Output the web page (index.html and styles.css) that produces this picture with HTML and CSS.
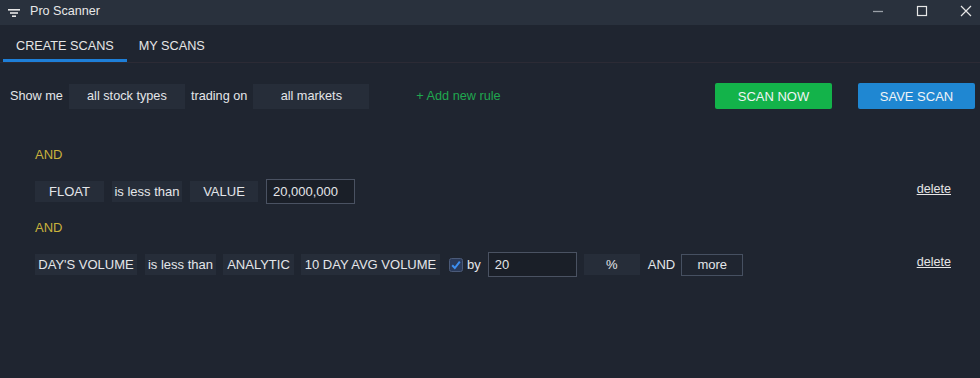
FILE: index.html
```html
<!DOCTYPE html>
<html>
<head>
<meta charset="utf-8">
<link rel="stylesheet" href="styles.css">
</head>
<body>
<div class="titlebar">
  <svg class="appicon" width="12" height="10" viewBox="0 0 12 10"><rect x="0" y="1" width="12" height="1.6" fill="#e6e6e6"/><rect x="2" y="4.2" width="8" height="1.6" fill="#e6e6e6"/><rect x="4" y="7.4" width="4" height="1.6" fill="#e6e6e6"/></svg>
  <span class="title">Pro Scanner</span>
  <div class="winctl">
    <svg width="12" height="12" viewBox="0 0 12 12"><line x1="1" y1="6.5" x2="11" y2="6.5" stroke="#9aa0a8" stroke-width="1.3"/></svg>
    <svg width="12" height="12" viewBox="0 0 12 12"><rect x="1.5" y="1.5" width="9" height="9" fill="none" stroke="#e6e6e6" stroke-width="1.2"/></svg>
    <svg width="12" height="12" viewBox="0 0 12 12"><path d="M1 1L11 11M11 1L1 11" stroke="#e6e6e6" stroke-width="1.2"/></svg>
  </div>
</div>
<div class="tabs">
  <div class="tab active">CREATE SCANS</div>
  <div class="tab">MY SCANS</div>
</div>
<div class="toolbar">
  <span class="lbl">Show me</span>
  <span class="box w116">all stock types</span>
  <span class="lbl">trading on</span>
  <span class="box w116">all markets</span>
  <span class="addrule">+ Add new rule</span>
  <span class="spacer"></span>
  <button class="btn green">SCAN NOW</button>
  <button class="btn blue">SAVE SCAN</button>
</div>
<div class="rules">
  <div class="and">AND</div>
  <div class="rule">
    <span class="box s w69">FLOAT</span>
    <span class="box s w70">is less than</span>
    <span class="box s w68">VALUE</span>
    <span class="input w89">20,000,000</span>
    <span class="spacer"></span>
    <a class="delete">delete</a>
  </div>
  <div class="and">AND</div>
  <div class="rule">
    <span class="box s w102">DAY'S VOLUME</span>
    <span class="box s w71 g7">is less than</span>
    <span class="box s w71 g7">ANALYTIC</span>
    <span class="box s w139">10 DAY AVG VOLUME</span>
    <span class="check"><svg width="14" height="14" viewBox="0 0 14 14"><rect x="0.5" y="0.5" width="13" height="13" rx="2" fill="#2a3a5a" stroke="#4b5a78"/><path d="M3.2 7.3L5.8 10L10.8 3.6" fill="none" stroke="#3d8ef0" stroke-width="2"/></svg></span>
    <span class="by">by</span>
    <span class="input w89">20</span>
    <span class="box s w56 pct">%</span>
    <span class="andinline">AND</span>
    <span class="more">more</span>
    <span class="spacer"></span>
    <a class="delete">delete</a>
  </div>
</div>
</body>
</html>
```
FILE: styles.css
```css
* { box-sizing: border-box; }
html, body { margin: 0; padding: 0; }
body {
  width: 980px;
  height: 378px;
  background: #1f2530;
  color: #e4e6e9;
  font-family: "Liberation Sans", Arial, sans-serif;
  font-size: 13px;
  overflow: hidden;
}
.titlebar {
  height: 25px;
  background: #29313d;
  display: flex;
  align-items: center;
  padding-left: 8px;
  padding-bottom: 3px;
}
.appicon { margin-right: 10px; margin-top: 3px; }
.title { font-size: 12.6px; color: #e8e8e8; }
.winctl {
  margin-left: auto;
  display: flex;
  align-items: center;
  gap: 32px;
  padding-right: 8px;
}
.tabs {
  height: 38px;
  display: flex;
  padding-left: 3px;
  border-bottom: 1px solid #2c2b35;
}
.tab {
  display: flex;
  align-items: center;
  padding: 7px 12px 0 12px;
  font-size: 12.7px;
  color: #e6e6e6;
  border-bottom: 3px solid transparent;
}
.tab.active {
  padding: 7px 13px 0 13px;
  border-bottom-color: #1e7fd8;
}
.toolbar {
  display: flex;
  align-items: center;
  margin-top: 20px;
  padding-left: 10px;
  padding-right: 5px;
  height: 26px;
  font-size: 12.7px;
}
.lbl { margin-right: 6px; }
.box {
  display: inline-flex;
  align-items: center;
  justify-content: center;
  height: 25px;
  background: #262d39;
  margin-right: 6px;
  color: #e4e6e9;
}
.box.s { height: 21px; margin-right: 8px; }
.box.s.g7 { margin-right: 7px; }
.w116 { width: 116px; }
.w69 { width: 69px; }
.w70 { width: 70px; }
.w68 { width: 68px; }
.w102 { width: 102px; }
.w71 { width: 71px; }
.w139 { width: 139px; }
.w56 { width: 56px; }
.w89 { width: 89px; }
.addrule { color: #1fa84f; margin-left: 41px; }
.spacer { flex: 1; }
.btn {
  border: none;
  border-radius: 2px;
  height: 26px;
  width: 117px;
  font-family: inherit;
  font-size: 13px;
  color: #f0f4f6;
  padding: 0;
}
.btn.green { background: #13b34a; margin-right: 26px; }
.btn.blue { background: #1f87d2; }
.rules { padding: 0 29px 0 35px; margin-top: 37px; }
.and { color: #c9b23c; height: 18px; line-height: 18px; }
.rules .and + .rule { margin-top: 15px; }
.rule { display: flex; align-items: center; height: 25px; }
.rule + .and { margin-top: 15px; }
.input {
  display: inline-flex;
  align-items: center;
  height: 25px;
  border: 1px solid #4a5262;
  background: #1a1f28;
  padding-left: 6px;
  margin-right: 7px;
}
.check { display: inline-flex; margin-left: 1px; margin-right: 4px; }
.by { margin-right: 7px; }
.pct { margin-right: 6px; }
.andinline { margin-right: 6px; }
.more {
  display: inline-flex;
  align-items: center;
  justify-content: center;
  width: 62px;
  height: 22px;
  border: 1px solid #465061;
  background: #1f2530;
}
.delete { text-decoration: underline; color: #e6e6e6; margin-bottom: 5px; margin-left: 2px; font-size: 12.6px; }
```
